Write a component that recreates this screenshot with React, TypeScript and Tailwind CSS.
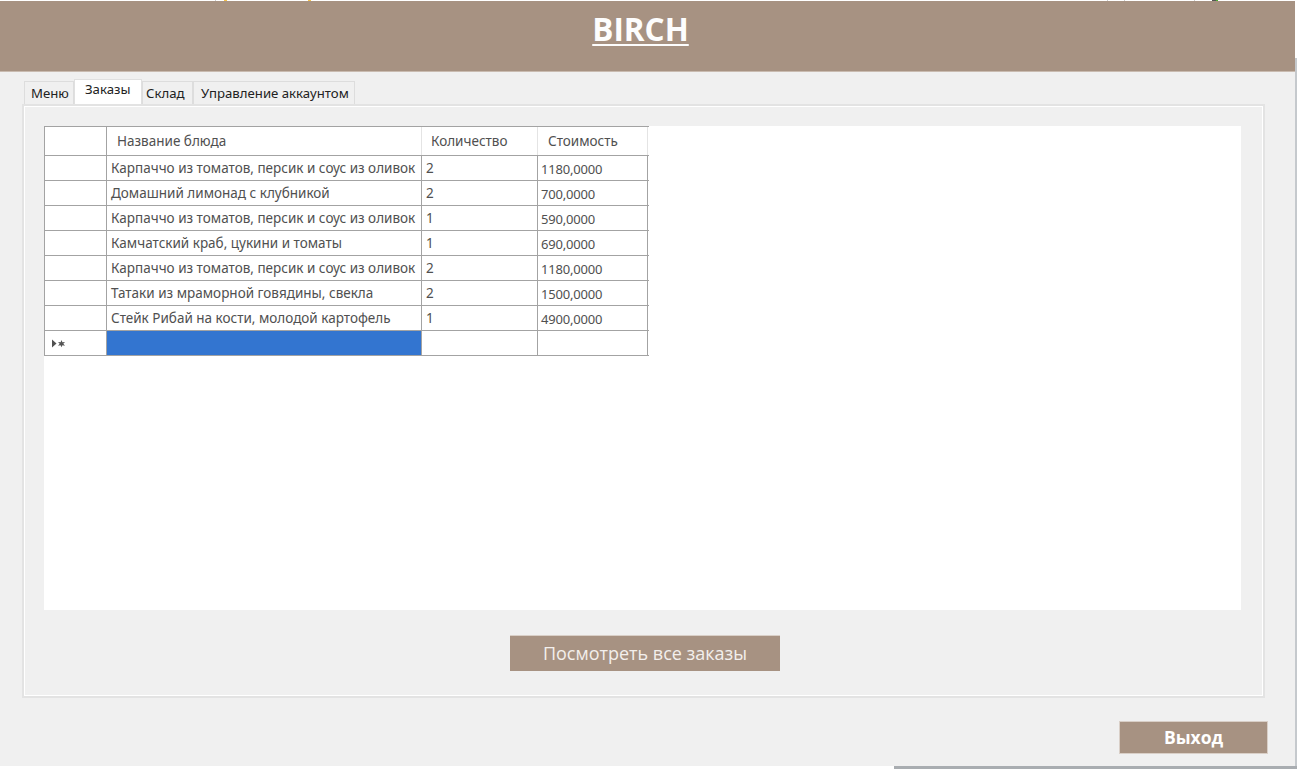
const rows = [
  { name: "Карпаччо из томатов, персик и соус из оливок", qty: "2", cost: "1180,0000" },
  { name: "Домашний лимонад с клубникой", qty: "2", cost: "700,0000" },
  { name: "Карпаччо из томатов, персик и соус из оливок", qty: "1", cost: "590,0000" },
  { name: "Камчатский краб, цукини и томаты", qty: "1", cost: "690,0000" },
  { name: "Карпаччо из томатов, персик и соус из оливок", qty: "2", cost: "1180,0000" },
  { name: "Татаки из мраморной говядины, свекла", qty: "2", cost: "1500,0000" },
  { name: "Стейк Рибай на кости, молодой картофель", qty: "1", cost: "4900,0000" },
];

const OrdersTable = () => {
  return (
    <div className="w-[605px] text-[13.5px] leading-none text-[#505050] border-l border-t border-[#a3a3a3]">
      <div className="flex h-[29px] border-b border-[#a3a3a3]">
        <div className="w-[62px] border-r border-[#a3a3a3]" />
        <div className="w-[315px] flex items-center pl-[10px] pt-[1px] border-r border-[#e4e4e4]">Название блюда</div>
        <div className="w-[116px] flex items-center pl-[9px] pt-[1px] border-r border-[#e4e4e4]">Количество</div>
        <div className="w-[110px] flex items-center pl-[10px] pt-[1px] border-r border-[#e4e4e4]">Стоимость</div>
      </div>
      {rows.map((row, i) => (
        <div key={i} className="flex h-[25px] border-b border-[#a3a3a3]">
          <div className="w-[62px] border-r border-[#a3a3a3]" />
          <div className="w-[315px] flex items-center pl-[4px] pt-[2px] whitespace-nowrap border-r border-[#a3a3a3]">{row.name}</div>
          <div className="w-[116px] flex items-center pl-[4px] pt-[2px] border-r border-[#a3a3a3]">{row.qty}</div>
          <div className="w-[110px] flex items-center pl-[3px] pt-[2px] text-[13px] tracking-[-0.2px] border-r border-[#a3a3a3]">{row.cost}</div>
        </div>
      ))}
      <div className="flex h-[25px] border-b border-[#a3a3a3]">
        <div className="w-[62px] flex items-center pl-[7px] border-r border-[#a3a3a3]">
          <svg width="14" height="9" viewBox="0 0 14 9">
            <path d="M0 0.5 L4.5 4.5 L0 8.5 Z" fill="#505050" />
            <path d="M9.5 1 L10.4 3.3 L13 3 L11.3 4.8 L13 6.8 L10.4 6.2 L9.5 8.2 L8.6 6.2 L6 6.8 L7.7 4.8 L6 3 L8.6 3.3 Z" fill="#555555" />
          </svg>
        </div>
        <div className="w-[315px] bg-[#3375d0] border-r border-[#a3a3a3]" />
        <div className="w-[116px] border-r border-[#a3a3a3]" />
        <div className="w-[110px] border-r border-[#a3a3a3]" />
      </div>
    </div>
  );
};

const App = () => {
  return (
    <div className="w-[1297px] h-[769px] overflow-hidden bg-white font-['Open_Sans',sans-serif]">
      {/* sliver of the window behind, along the top edge */}
      <div className="h-px flex">
        <div className="ml-[215px] w-px bg-[#cccccc]" />
        <div className="ml-[8px] w-[3px] bg-[#f5c04a]" />
        <div className="ml-[81px] w-[3px] bg-[#f5c04a]" />
        <div className="ml-[796px] w-px bg-[#cccccc]" />
        <div className="ml-[16px] w-px bg-[#cccccc]" />
        <div className="ml-[69px] w-px bg-[#cccccc]" />
        <div className="ml-[17px] w-[4px] bg-[#555555]" />
        <div className="w-[2px] bg-[#4caf30]" />
      </div>

      <div className="flex h-[765px]">
        <div className="w-[1295px] bg-[#f0f0f0] flex flex-col">
          <div className="h-[71px] bg-[#a79282] border-b border-[#c9bbb0] flex justify-center pt-[7px] pr-[14px]">
            <span className="h-[42px] text-[31.5px] leading-[42px] font-bold text-[#fdfdfd] underline underline-offset-[3px] decoration-2">BIRCH</span>
          </div>

          <div className="pl-[22px] pt-[8px] w-[1265px] font-['Noto_Sans',sans-serif]">
            <div className="flex h-[24px] items-end pl-[2px] text-[13.2px] leading-none text-[#222222]">
              <div className="w-[50px] h-[23px] pl-[6px] pt-[2px] border border-b-0 border-[#dddddd] flex items-center">Меню</div>
              <div className="w-[68px] h-[25px] pl-[10px] pt-[3px] bg-white border border-b-0 border-[#e0e0e0]">Заказы</div>
              <div className="w-[51px] h-[23px] pl-[3px] pt-[2px] border border-b-0 border-[#dddddd] flex items-center">Склад</div>
              <div className="w-[162px] h-[23px] pl-[7px] pt-[2px] border border-b-0 border-[#dddddd] flex items-center whitespace-nowrap">Управление аккаунтом</div>
            </div>

            <div className="h-[594px] border-2 border-[#e3e3e3] flex flex-col">
              <div className="flex-1 border border-white flex flex-col px-[19px] pt-[19px]">
                <div className="w-[1197px] h-[484px] bg-white">
                  <OrdersTable />
                </div>
                <button className="mt-[25px] ml-[466px] w-[270px] h-[36px] bg-[#a79282] border-t border-[#d9cfc7] text-[18px] text-[#f3efec] font-['Open_Sans',sans-serif]">
                  Посмотреть все заказы
                </button>
              </div>
            </div>

            <div className="mt-[23px] flex justify-end">
              <button className="-mr-[3px] w-[149px] h-[33px] bg-[#a79282] border border-[#d9cfc7] text-[17.5px] font-bold text-white font-['Open_Sans',sans-serif]">
                Выход
              </button>
            </div>
          </div>
        </div>
        <div className="w-[2px] mt-[57px] bg-[#c5c9cd]" />
      </div>
      <div className="ml-[894px] h-[3px] bg-[#a9adb1]" />
    </div>
  );
};

export default App;
